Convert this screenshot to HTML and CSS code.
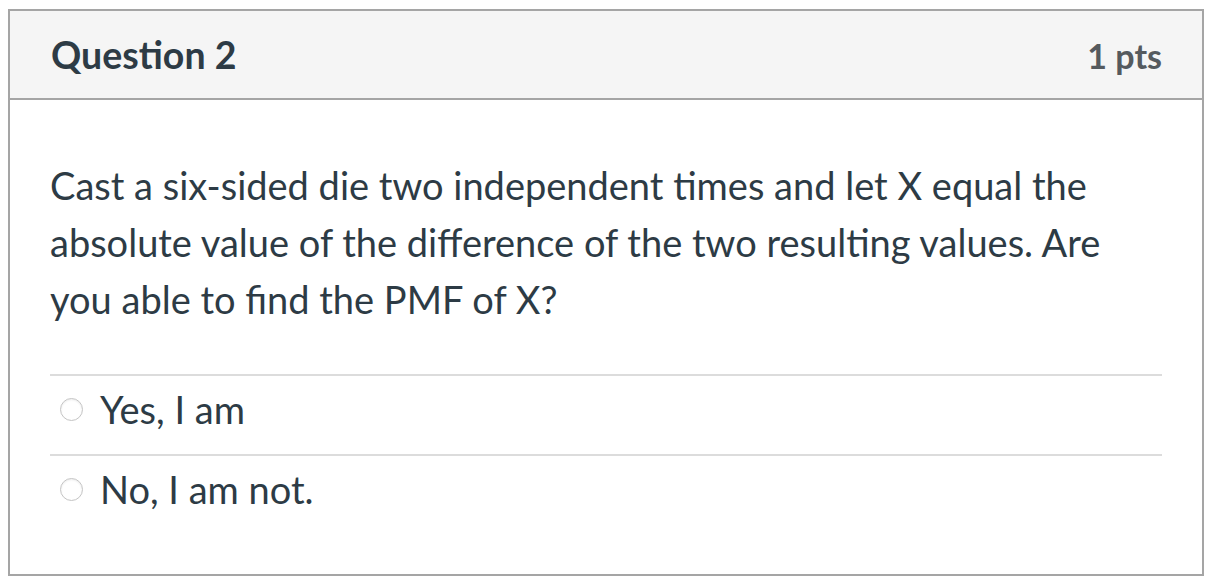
FILE: index.html
```html
<!DOCTYPE html>
<html>
<head>
<meta charset="utf-8">
<link rel="stylesheet" href="styles.css">
</head>
<body>
<div class="question">
  <div class="header">
    <h2 class="title">Question 2</h2>
    <div class="points">1 pts</div>
  </div>
  <div class="content">
    <p class="text">Cast a six-sided die two independent times and let X equal the absolute value of the difference of the two resulting values. Are you able to find the PMF of X?</p>
    <div class="answers">
      <label class="answer"><span class="radio"></span><span class="label">Yes, I am</span></label>
      <label class="answer"><span class="radio"></span><span class="label">No, I am not.</span></label>
    </div>
  </div>
</div>
</body>
</html>
```
FILE: styles.css
```css
html, body {
  margin: 0;
  padding: 0;
  background: #fff;
}
body {
  font-family: Lato, "Liberation Sans", sans-serif;
  color: #2d3b45;
  padding: 9px 4px 0 8px;
}
.question {
  width: 1196px;
  box-sizing: border-box;
  border: 2px solid #a5a5a5;
  height: 567px;
  display: flex;
  flex-direction: column;
}
.header {
  background: #f5f5f5;
  border-bottom: 2px solid #a5a5a5;
  height: 89px;
  box-sizing: border-box;
  display: flex;
  align-items: center;
  justify-content: space-between;
  padding: 0 40px 0 41px;
}
.title {
  margin: 0;
  font-size: 37.5px;
  line-height: 45px;
  font-weight: 700;
  color: #2d3b45;
}
.points {
  font-size: 34px;
  line-height: 45px;
  font-weight: 700;
  color: #555a5e;
  padding-top: 2px;
}
.content {
  padding: 0 40px;
}
.text {
  margin: 57px 0 0 0;
  font-size: 38px;
  line-height: 57px;
}
.answers {
  margin-top: 46px;
}
.answer {
  display: flex;
  align-items: center;
  border-top: 2px solid #dcdcdc;
  height: 78px;
  box-sizing: content-box;
  padding: 0;
  font-size: 38px;
}
.answer .label {
  line-height: 46px;
  margin-top: -12px;
}
.radio {
  width: 21px;
  height: 21px;
  border: 1px solid #c4c4c4;
  border-radius: 50%;
  box-shadow: inset 0 1px 2px rgba(0,0,0,0.08);
  margin: -12px 17px 0 10px;
  background: #fff;
  flex: none;
}
```
